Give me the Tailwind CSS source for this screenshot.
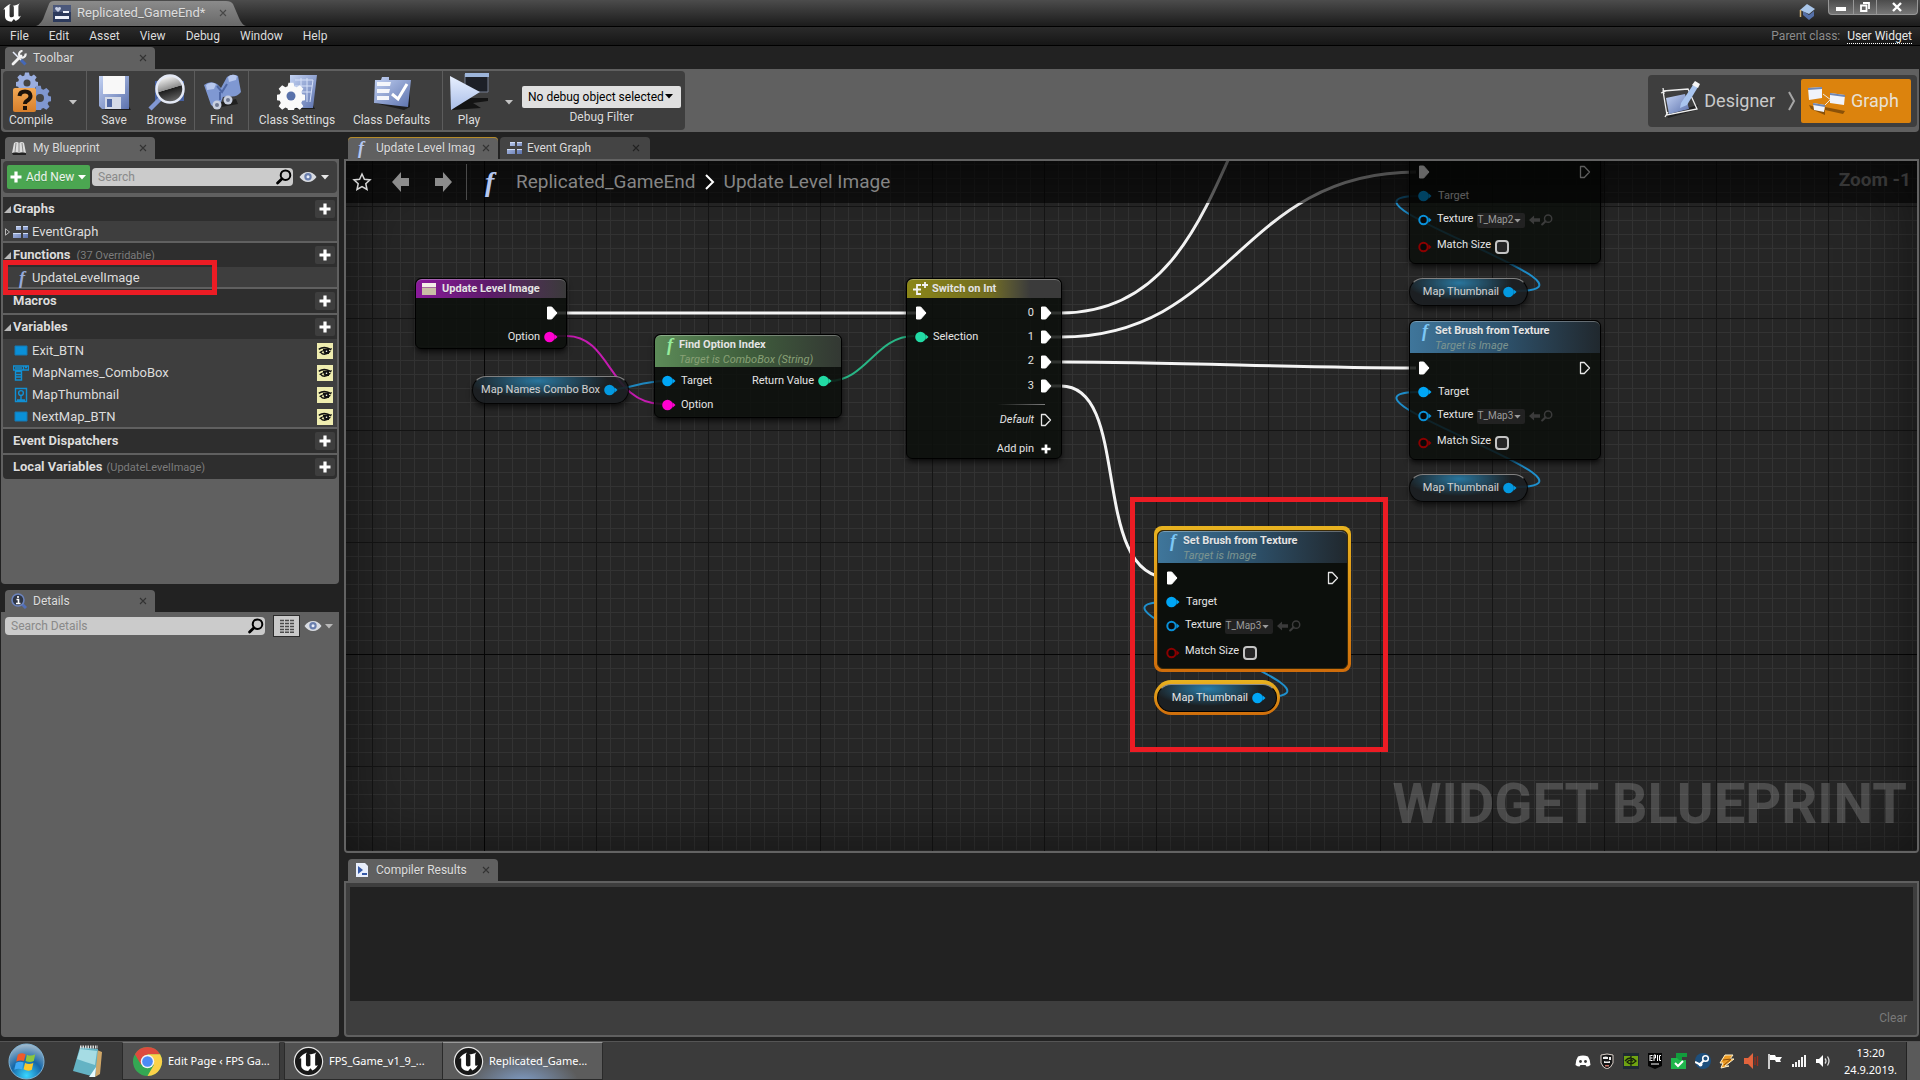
<!DOCTYPE html>
<html lang="en">
  <head>
    <meta charset="UTF-8" />
    <meta name="viewport" content="width=device-width, initial-scale=1.0" />
    <title>Replicated_GameEnd</title>
    <script src="https://cdn.jsdelivr.net/npm/@tailwindcss/browser@4"></script>
  </head>
  <body class="h-screen overflow-hidden bg-[#222222] font-['Roboto',sans-serif] text-xs text-[#dcdcdc]">
    <!-- shared icons -->
    <svg class="absolute h-0 w-0">
      <defs>
        <linearGradient id="steel" x1="0" y1="0" x2="1" y2="1"><stop offset="0" stop-color="#c3d2f3" /><stop offset="1" stop-color="#5c72ad" /></linearGradient>
        <linearGradient id="ice" x1="0" y1="0" x2="0" y2="1"><stop offset="0" stop-color="#e8f0ff" /><stop offset="1" stop-color="#a9bde8" /></linearGradient>
        <linearGradient id="box" x1="0" y1="0" x2="0" y2="1"><stop offset="0" stop-color="#f3a955" /><stop offset="1" stop-color="#d87f2a" /></linearGradient>
        <linearGradient id="lens" x1="0.3" y1="0" x2="0.6" y2="1"><stop offset="0" stop-color="#ffffff" /><stop offset=".5" stop-color="#8f8f8f" /><stop offset=".52" stop-color="#1e1e1e" /><stop offset="1" stop-color="#6b6b6b" /></linearGradient>
        <radialGradient id="orb" cx=".5" cy=".9" r=".9"><stop offset="0" stop-color="#39d6ff" /><stop offset=".5" stop-color="#1667a8" /><stop offset="1" stop-color="#a7bccc" /></radialGradient>
        <symbol id="close" viewBox="0 0 8 8"><path d="M1 1l6 6M7 1l-6 6" stroke="currentColor" stroke-width="1.1" /></symbol>
        <symbol id="plus" viewBox="0 0 12 12"><path d="M4.4 0.5h3.2v3.9h3.9v3.2H7.600v3.9H4.400V7.600H0.500V4.400h3.900z" fill="currentColor" /></symbol>
        <symbol id="caret" viewBox="0 0 8 5"><path d="M0 0h8L4 4.500z" fill="currentColor" /></symbol>
        <symbol id="open" viewBox="0 0 7 7"><path d="M7 0v7H0z" fill="#b9b9b9" /></symbol>
        <symbol id="find" viewBox="0 0 16 16"><circle cx="9.500" cy="6.200" r="4.800" fill="none" stroke="currentColor" stroke-width="2" /><path d="M6 9.700L1.600 14" stroke="currentColor" stroke-width="2.800" stroke-linecap="round" /></symbol>
        <symbol id="gear" viewBox="-10 -10 20 20"><path d="M-1.800-9.500h3.600l.6 2.600 1.600.7 2.300-1.500 2.500 2.500-1.500 2.300.7 1.600 2.600.6v3.600l-2.600.5-.7 1.600 1.500 2.300-2.500 2.500-2.300-1.500-1.600.7-.6 2.500h-3.600l-.6-2.500-1.600-.7-2.300 1.500-2.500-2.500 1.500-2.300-.7-1.600-2.500-.5v-3.600l2.500-.6.7-1.600-1.500-2.300 2.500-2.500 2.300 1.500 1.600-.7z" fill="currentColor" /></symbol>
        <symbol id="graph" viewBox="0 0 17 14"><path d="M4 1h5v4H4zM11 1h5v4h-5zM1 8h8v5H1zM11 8h5v5h-5z" fill="url(#steel)" /><path d="M4 1h5v1H4zM11 1h5v1h-5zM1 8h8v1H1zM11 8h5v1h-5z" fill="#cfdcf5" /></symbol>
        <symbol id="eye" viewBox="0 0 18 12"><path d="M0.500 6Q4 1 9 1t8.500 5Q14 11 9 11T0.500 6z" fill="#d9dce2" /><circle cx="9" cy="5.800" r="3.700" fill="#6a7fae" /><circle cx="9" cy="5.800" r="1.500" fill="#e9eefa" /></symbol>
        <symbol id="visible" viewBox="0 0 16 16"><path d="M0 0h16v16H0z" fill="#efedb0" /><path d="M1.500 5.500Q7 2 13.500 5.500L15 5l-1 2.500Q8 4 2 7z" fill="#111" /><path d="M2 9.300Q7.500 5 14 8.500 10 13 5 11.500 4 10 2 9.300z" fill="#111" /><path d="M6 6h6v5H6z" fill="#111" /><path d="M4.500 9.200q1-.9 2-1.200 0 1.500 1 2.400-1.600.2-3-1.200z" fill="#efedb0" /><circle cx="9.500" cy="8.300" r=".8" fill="#fff" /></symbol>
        <symbol id="exec" viewBox="0 0 12 14"><path d="M1.500 1h4.200L11 7l-5.300 6H1.500z" fill="#ffffff" stroke="#ffffff" stroke-linejoin="round" /></symbol>
        <symbol id="exec-open" viewBox="0 0 12 14"><path d="M1.500 1.500h3.800L10.500 7l-5.200 5.500H1.500z" fill="none" stroke="#e6e6e6" stroke-width="1.300" stroke-linejoin="round" /></symbol>
        <symbol id="pin" viewBox="0 0 14 12"><circle cx="5.500" cy="6" r="5.300" fill="currentColor" /><path d="M10.500 3.200L13.500 6l-3 2.800z" fill="currentColor" /></symbol>
        <symbol id="pin-open" viewBox="0 0 14 12"><circle cx="5.500" cy="6" r="4.200" fill="#080808" stroke="currentColor" stroke-width="2" /><path d="M10.500 3.200L13.500 6l-3 2.800z" fill="currentColor" /></symbol>
        <symbol id="back" viewBox="0 0 12 10"><path d="M5.500 0v3H12v4H5.500v3L0 5z" fill="currentColor" /></symbol>
        <symbol id="unreal" viewBox="0 0 24 24"><path d="M2 9C4 5.500 7.200 3.200 10.600 2.200C9.500 3.200 9.200 4 9.200 5v10.300c0 1.400 1 2.200 2.200 2.200 1.100 0 2-.5 2.700-1.200V6.200c0-.9-.5-1.500-1.400-1.800C15.500 4 18.500 3.500 21 1.500c-1 1.200-1.700 2.300-1.700 3.800v9.900c0 1 .4 1.400 1 1.400.7 0 1.300-.4 2-1.100-1.100 3-3.400 5.200-6 6.300l-2.200-2.300-2.500 3C7 22.200 4 20 4 16.500V9c0-.9-.9-.9-2 0z" fill="#ffffff" /></symbol>
      </defs>
    </svg>

    <div class="flex h-full flex-col">
      <!-- title bar -->
      <header class="flex h-[26px] shrink-0 items-start bg-gradient-to-b from-[#4c4c4c] to-[#1c1c1c]">
        <svg class="mt-0.5 h-[21px] w-6"><use href="#unreal" /></svg>
        <div class="relative ml-3 flex h-[26px] w-[210px] items-center">
          <svg class="absolute inset-0 h-full w-full" viewBox="0 0 210 26" preserveAspectRatio="none">
            <defs><linearGradient id="tab" x1="0" y1="0" x2="0" y2="1"><stop offset="0" stop-color="#8b8b8b" /><stop offset="1" stop-color="#686868" /></linearGradient></defs>
            <path d="M0 26Q6 24 9 14L13 4Q14 1 18 1H190Q195 1 197 4L203 18Q206 25 210 26z" fill="url(#tab)" />
          </svg>
          <svg class="relative ml-[17px] h-[17px] w-[18px]" viewBox="0 0 18 17"><path d="M0 0h18v17H0z" fill="#2c3a5c" /><path d="M0 0h18v7H0z" fill="#4b587b" /><path d="M5 7L2 4q0-2 1.500-2T5 3q.5-1 1.800-1T8 4z" fill="#c8d0e5" /><path d="M10 6h6v2h-6zM2 11h14v3H2z" fill="#eef2fb" /></svg>
          <span class="relative ml-1.5 text-[13px] leading-5 text-shadow-2xs text-[#dddddd]">Replicated_GameEnd*</span>
          <button class="absolute right-[19px] text-[#474747]" aria-label="Close tab"><svg class="h-2 w-2"><use href="#close" /></svg></button>
        </div>
        <div class="ml-auto flex items-start">
          <svg class="mt-1 mr-3 h-4 w-[18px]" viewBox="0 0 18 16"><path d="M5 7l6 4 5-4v5l-5 4-6-5z" fill="#5570a8" /><path d="M9 0l8 5-6 5-9-4z" fill="#a9c6ea" /><path d="M2.500 6v7" stroke="#d3b070" stroke-width="1.500" /></svg>
          <button class="flex h-[15px] w-[26px] items-center justify-center rounded-bl-sm border border-t-0 border-[#979797] bg-gradient-to-b from-[#4c4c4c] to-[#777]" aria-label="Minimize"><span class="mt-1 h-1 w-2.5 bg-white"></span></button>
          <button class="flex h-[15px] w-[23px] items-center justify-center border border-t-0 border-l-0 border-[#979797] bg-gradient-to-b from-[#4c4c4c] to-[#777]" aria-label="Restore"><svg class="h-2.5 w-2.5" viewBox="0 0 10 10"><path d="M3 1h6v6M1 3.500h5.500V9H1z" fill="none" stroke="#fff" stroke-width="1.800" /></svg></button>
          <button class="mr-0.5 flex h-[15px] w-[41px] items-center justify-center rounded-br-sm border border-t-0 border-l-0 border-[#979797] bg-gradient-to-b from-[#4c4c4c] to-[#777] text-white" aria-label="Close"><svg class="h-2.5 w-2.5" viewBox="0 0 10 10"><path d="M1 1l8 8M9 1L1 9" stroke="#fff" stroke-width="2.400" /></svg></button>
        </div>
      </header>

      <!-- menu bar -->
      <nav class="flex h-5 shrink-0 items-center gap-5 border-y border-black bg-gradient-to-b from-[#2b2b2b] to-[#161616] pr-2 pl-2.5 text-shadow-2xs">
        <button>File</button>
        <button>Edit</button>
        <button>Asset</button>
        <button>View</button>
        <button>Debug</button>
        <button>Window</button>
        <button>Help</button>
        <span class="ml-auto whitespace-nowrap text-[#8c8c8c]">Parent class: <a href="#" class="ml-1 border-b border-dotted border-white text-[#e8e8e8]">User Widget</a></span>
      </nav>

      <!-- toolbar -->
      <div class="shrink-0 px-px pt-px">
        <div class="ml-1 flex h-[22px] w-[150px] items-center rounded-t-sm bg-[#606060] pl-1.5 text-shadow-2xs">
          <svg class="h-4 w-4" viewBox="0 0 16 16"><path d="M2 2l9 9" stroke="#e6ecfa" stroke-width="1.500" /><path d="M10 10l4.500 4.500" stroke="#4468b8" stroke-width="3" /><path d="M2 14l8-8" stroke="#f2f2f2" stroke-width="2.800" stroke-linecap="round" /><path d="M14.500 3.500A3.300 3.300 0 1 1 11.500 1" fill="none" stroke="#f2f2f2" stroke-width="2.200" /></svg>
          <span class="ml-1.5">Toolbar</span>
          <button class="mr-2 ml-auto text-[#333]" aria-label="Close Toolbar"><svg class="h-2 w-2"><use href="#close" /></svg></button>
        </div>
        <div class="flex h-[63px] items-center justify-between rounded-b-sm bg-[#606060] px-0.5">
          <div class="flex h-[59px] items-stretch rounded bg-[#3e3e3e] pr-1 text-shadow-2xs">
            <button class="flex w-14 flex-col items-center pt-px">
              <svg class="h-10 w-10" viewBox="0 0 40 40"><use href="#gear" x="5" y="0" width="22" height="22" color="#9aaee0" /><use href="#gear" x="15" y="13" width="25" height="25" color="#7f97d0" /><circle cx="16" cy="11" r="3.500" fill="#444" /><circle cx="29" cy="26" r="4" fill="#444" /><rect x="2" y="16" width="23" height="24" rx="2" fill="url(#box)" /><path d="M8.500 24Q9 19.500 14 19.500T19.500 24Q19.500 26.500 16.500 28.500Q14 29.700 14 32M14 34v4" fill="none" stroke="#1c120a" stroke-width="4" /></svg>
              <span>Compile</span>
            </button>
            <button class="flex w-7 items-center justify-center border-r border-[#5c5c5c] text-[#c4c4c4]" aria-label="Compile options"><svg class="mt-1 h-[5px] w-2"><use href="#caret" /></svg></button>
            <button class="flex w-[54px] flex-col items-center pt-px">
              <svg class="h-10 w-10" viewBox="0 0 40 40"><path d="M8 38h29l-3-5z" fill="#1c1c1c" /><path d="M5 4h30v33H8l-3-3z" fill="url(#steel)" /><path d="M9 4h22v18H9z" fill="#f8f8f8" /><path d="M11 25h16v12H11z" fill="#d5dbe8" /><path d="M13 27h5v8h-5z" fill="#526aa5" /></svg>
              <span>Save</span>
            </button>
            <button class="flex w-[53px] flex-col items-center pt-px pr-0.5">
              <svg class="h-10 w-10" viewBox="0 0 40 40"><path d="M8 9h6v20H8zM33 9h4v20h-6z" fill="#4660a0" /><path d="M13 27L3 37" stroke="#8197d2" stroke-width="4.500" /><circle cx="23" cy="17" r="13.500" fill="url(#lens)" stroke="#e4e9f5" stroke-width="2.500" /></svg>
              <span>Browse</span>
            </button>
            <button class="flex w-[55px] flex-col items-center border-x border-[#5c5c5c] pt-px">
              <svg class="h-10 w-10" viewBox="0 0 40 40"><path d="M14 36l22-4-2-5-18 4z" fill="#202020" /><path d="M2 13q6-5 13-1l4 4 6-11q5-4 11-1l3 16q-5 6-12 4l-6 1-3 8q-5 3-9 0z" fill="#7f98d2" /><path d="M4 13q5-4 10-1l-2 5-7 1zM26 5q4-4 9-1l-1 4-7 2z" fill="#b6c7ee" /><path d="M15 14l5 6 5-8M18 20v8" stroke="#4f68a5" stroke-width="2" fill="none" /><circle cx="15" cy="33" r="4.500" fill="#c8cfdf" /><circle cx="15" cy="33" r="2" fill="#6e7891" /><circle cx="26" cy="28" r="4.500" fill="#c8cfdf" /><circle cx="26" cy="28" r="2" fill="#6e7891" /></svg>
              <span>Find</span>
            </button>
            <button class="flex w-24 flex-col items-center pt-px">
              <svg class="h-10 w-10" viewBox="0 0 40 40"><path d="M14 37h24l-3-6H18z" fill="#1d1d1d" /><path d="M13 3h27l-4 33H13z" fill="url(#steel)" /><path d="M18 8h18l-3 22M18 14h17M18 20h16M24 6v24M30 6v24" fill="none" stroke="#d5e0f8" stroke-width="1" /><use href="#gear" x="0" y="10" width="28" height="28" color="#fafafa" /><circle cx="14" cy="24" r="4.500" fill="#5871aa" /></svg>
              <span>Class Settings</span>
            </button>
            <button class="flex w-[98px] flex-col items-center border-r border-[#5c5c5c] pt-px pr-1">
              <svg class="h-10 w-10" viewBox="0 0 40 40"><path d="M2 31l30 7 6-3V14z" fill="#1d1d1d" /><path d="M3 8h6l1-3h7v3h22l-3 27L2 31z" fill="url(#steel)" /><path d="M5 10h14l-1 4H5zM5 17h13l-1 4H5zM5 24h12v4H5z" fill="#f4f6fb" /><path d="M20 22l6 5 9-15" fill="none" stroke="#fff" stroke-width="3" /></svg>
              <span>Class Defaults</span>
            </button>
            <button class="flex w-[52px] flex-col items-center pt-px">
              <svg class="h-10 w-10" viewBox="0 0 40 40"><path d="M16 2h23v18H16z" fill="#1d2027" stroke="#747d90" /><path d="M16 1h24v4H16z" fill="#9db5da" /><path d="M3 38L32 36l-8-5 15-2v-3H12z" fill="#141414" /><path d="M1 4l30 16L2 38z" fill="url(#ice)" /></svg>
              <span>Play</span>
            </button>
            <button class="flex w-[27px] items-center justify-center text-[#c4c4c4]" aria-label="Play options"><svg class="mt-1 h-[5px] w-2"><use href="#caret" /></svg></button>
            <div class="flex flex-col items-center pt-[15px]">
              <div class="relative">
                <select id="debug" class="block h-[22px] w-[159px] appearance-none rounded-xs bg-[#e0e0e0] pl-1.5 text-xs text-black">
                  <option>No debug object selected</option>
                </select>
                <svg class="pointer-events-none absolute top-2 right-2 h-[5px] w-2 text-black"><use href="#caret" /></svg>
              </div>
              <label for="debug" class="mt-px">Debug Filter</label>
            </div>
          </div>
          <div class="flex h-[52px] items-center rounded bg-[#3e3e3e] px-1.5 text-lg text-[#c9c9c9]">
            <button class="flex items-center">
              <svg class="ml-1.5 h-10 w-10" viewBox="0 0 40 40"><path d="M7 34L34 25l4-1-2 5-28 8z" fill="#222" /><path d="M3 10l25-2 9 20L7 34zM1 12l5-2M3 7l1 6M5 36l3-5" fill="none" stroke="#eee" stroke-width="1.300" /><path d="M6 17l19-4 4 15-20 5z" fill="url(#steel)" /><path d="M21 22L33 4l5 2-11 18-7 3z" fill="#a9c5ef" /><path d="M32 4l3-4 5 3-2 4z" fill="#f4f4f4" /></svg>
              <span class="ml-1">Designer</span>
            </button>
            <svg class="mr-1 ml-2.5 h-5 w-3" viewBox="0 0 12 20"><path d="M4 1l5 9-5 9" fill="none" stroke="#a5a5a5" stroke-width="2" /></svg>
            <button class="flex h-11 w-[110px] items-center rounded-xs bg-[#dc830d] pl-1.5 text-[#e9e1d5]">
              <svg class="h-8 w-10" viewBox="0 0 40 32"><path d="M2 20l16 5v5L4 24zM18 22l20 4-2 3-18-4z" fill="#8b5108" /><path d="M16 9l8 6M24 14l-6 6" stroke="#e9e9e9" /><path d="M1 3l14-1v11L2 15zM23 8l15 2-1 10-14-2zM6 18l12 2-1 7-10-2z" fill="#f0f3fa" /><path d="M1 3l14-1v2L1 5zM23 8l15 2v2l-15-2zM6 18l12 2v2L6 20z" fill="#6f86b3" /></svg>
              <span class="ml-1">Graph</span>
            </button>
          </div>
        </div>
      </div>

      <main class="flex min-h-0 flex-1 gap-[5px] px-px pt-[5px] pb-1">
        <!-- left column -->
        <aside class="flex w-[338px] shrink-0 flex-col gap-1.5">
          <section class="flex flex-1 flex-col">
            <div class="ml-1 flex h-[22px] w-[150px] shrink-0 items-center rounded-t-sm bg-[#606060] pl-1.5 text-shadow-2xs">
              <svg class="h-4 w-4" viewBox="0 0 16 16"><path d="M1 13h14v2H2z" fill="#222" /><path d="M3 3q3-2 5 0 3-2 5 0l2 10q-4-2-7 0-3-2-7 0z" fill="#dedede" /><path d="M8 3v10M5 3L4 12M11 3l1 9" stroke="#8a8a8a" /></svg>
              <span class="ml-1.5">My Blueprint</span>
              <button class="mr-2 ml-auto text-[#333]" aria-label="Close My Blueprint"><svg class="h-2 w-2"><use href="#close" /></svg></button>
            </div>
            <div class="relative flex flex-1 flex-col gap-0.5 rounded-b-sm bg-[#606060] p-0.5 text-[13px]">
              <div class="mb-0.5 flex h-8 items-center rounded-sm bg-[#3e3e3e] px-1">
                <button class="flex h-6 w-[83px] items-center gap-1 rounded-xs bg-[#4ba651] pl-[3px] text-xs text-white/90 text-shadow-2xs">
                  <svg class="h-3 w-3 text-white"><use href="#plus" /></svg>Add New<svg class="h-[5px] w-2 text-white"><use href="#caret" /></svg>
                </button>
                <div class="relative ml-0.5">
                  <input type="text" aria-label="Search" placeholder="Search" class="block h-[18px] w-[201px] rounded-sm bg-[#cbcbcb] px-1.5 text-xs text-black placeholder:text-[#898989]" />
                  <svg class="absolute top-px right-px h-4 w-4 text-black"><use href="#find" /></svg>
                </div>
                <button class="ml-1.5 flex items-center gap-1 text-[#e8e8e8]" aria-label="View options"><svg class="h-3 w-[18px]"><use href="#eye" /></svg><svg class="h-[5px] w-2"><use href="#caret" /></svg></button>
              </div>

              <div class="bg-[#3e3e3e]">
                <h2 class="flex h-6 items-center bg-[#2e2e2e] pr-0.5 pl-px font-bold text-shadow-2xs"><svg class="mr-0.5 h-[7px] w-[7px]"><use href="#open" /></svg>Graphs<button class="ml-auto flex h-[18px] w-5 items-center justify-center rounded-xs bg-[#3e3e3e] text-white" aria-label="Add graph"><svg class="h-3 w-3"><use href="#plus" /></svg></button></h2>
                <div class="flex h-5 items-center pt-px pl-0.5"><svg class="h-2 w-[5px]" viewBox="0 0 5 8"><path d="M.5.8v6.400L4.500 4z" fill="none" stroke="#b9b9b9" /></svg><svg class="ml-0.5 h-3.5 w-[17px]"><use href="#graph" /></svg><span class="ml-[3px]">EventGraph</span></div>
              </div>
              <div class="bg-[#3e3e3e]">
                <h2 class="flex h-6 items-center bg-[#2e2e2e] pr-0.5 pl-px font-bold text-shadow-2xs"><svg class="mr-0.5 h-[7px] w-[7px]"><use href="#open" /></svg>Functions<span class="mt-0.5 ml-1.5 text-[11px] font-normal text-[#7d7d7d]">(37 Overridable)</span><button class="ml-auto flex h-[18px] w-5 items-center justify-center rounded-xs bg-[#3e3e3e] text-white" aria-label="Add function"><svg class="h-3 w-3"><use href="#plus" /></svg></button></h2>
                <div class="flex h-5 items-center pt-px pl-4"><span class="w-[13px] font-['Liberation_Serif',serif] text-lg leading-5 font-bold text-[#95a9d9] italic">f</span>UpdateLevelImage</div>
              </div>
              <h2 class="flex h-6 items-center bg-[#2e2e2e] pr-0.5 pl-2.5 font-bold text-shadow-2xs">Macros<button class="ml-auto flex h-[18px] w-5 items-center justify-center rounded-xs bg-[#3e3e3e] text-white" aria-label="Add macro"><svg class="h-3 w-3"><use href="#plus" /></svg></button></h2>
              <div class="bg-[#3e3e3e]">
                <h2 class="flex h-6 items-center bg-[#2e2e2e] pr-0.5 pl-px font-bold text-shadow-2xs"><svg class="mr-0.5 h-[7px] w-[7px]"><use href="#open" /></svg>Variables<button class="ml-auto flex h-[18px] w-5 items-center justify-center rounded-xs bg-[#3e3e3e] text-white" aria-label="Add variable"><svg class="h-3 w-3"><use href="#plus" /></svg></button></h2>
                <ul>
                  <li class="flex h-[22px] items-center pt-px pr-1 pl-2.5"><svg class="h-4 w-4" viewBox="0 0 16 16"><path d="M2 3h12v9H2z" fill="#0a90d8" stroke="#1579b3" /></svg><span class="ml-[3px]">Exit_BTN</span><svg class="ml-auto h-4 w-4"><use href="#visible" /></svg></li>
                  <li class="flex h-[22px] items-center pt-px pr-1 pl-2.5"><svg class="h-4 w-4" viewBox="0 0 16 16"><path d="M.5 1h15v4H.5zM10.500 1v4M2 3h7M12 2.500h2M2.500 6.500h6V15h-6zM3 9.500h6M3 12h6" fill="none" stroke="#1190d4" stroke-width="1.400" /></svg><span class="ml-[3px]">MapNames_ComboBox</span><svg class="ml-auto h-4 w-4"><use href="#visible" /></svg></li>
                  <li class="flex h-[22px] items-center pt-px pr-1 pl-2.5"><svg class="h-4 w-4" viewBox="0 0 16 16"><path d="M2.500 1.500h11v13h-11zM4 13h8M8 8v5" fill="none" stroke="#1190d4" stroke-width="1.400" /><circle cx="8" cy="6" r="2.400" fill="none" stroke="#1190d4" stroke-width="1.400" /></svg><span class="ml-[3px]">MapThumbnail</span><svg class="ml-auto h-4 w-4"><use href="#visible" /></svg></li>
                  <li class="flex h-[22px] items-center pt-px pr-1 pl-2.5"><svg class="h-4 w-4" viewBox="0 0 16 16"><path d="M2 3h12v9H2z" fill="#0a90d8" stroke="#1579b3" /></svg><span class="ml-[3px]">NextMap_BTN</span><svg class="ml-auto h-4 w-4"><use href="#visible" /></svg></li>
                </ul>
              </div>
              <h2 class="flex h-6 items-center bg-[#2e2e2e] pr-0.5 pl-2.5 font-bold text-shadow-2xs">Event Dispatchers<button class="ml-auto flex h-[18px] w-5 items-center justify-center rounded-xs bg-[#3e3e3e] text-white" aria-label="Add event dispatcher"><svg class="h-3 w-3"><use href="#plus" /></svg></button></h2>
              <h2 class="flex h-6 items-center rounded-b-sm bg-[#2e2e2e] pr-0.5 pl-2.5 font-bold text-shadow-2xs">Local Variables<span class="mt-0.5 ml-1 text-[11px] font-normal text-[#7d7d7d]">(UpdateLevelImage)</span><button class="ml-auto flex h-[18px] w-5 items-center justify-center rounded-xs bg-[#3e3e3e] text-white" aria-label="Add local variable"><svg class="h-3 w-3"><use href="#plus" /></svg></button></h2>
              <div class="pointer-events-none absolute top-[101px] left-0.5 h-[35px] w-[214px] border-5 border-[#ec1c24]"></div>
            </div>
          </section>

          <section class="flex flex-1 flex-col">
            <div class="ml-1 flex h-[22px] w-[150px] shrink-0 items-center rounded-t-sm bg-[#606060] pl-1.5 text-shadow-2xs">
              <svg class="h-4 w-4" viewBox="0 0 16 16"><path d="M10 10l5 5" stroke="#526fb8" stroke-width="3" /><circle cx="7" cy="7" r="6" fill="#2f3645" stroke="#6b83bd" stroke-width="1.600" /><path d="M7 3v2M5.500 6.500h2V10M5 10.500h4.500" stroke="#fff" stroke-width="1.600" fill="none" /></svg>
              <span class="ml-1.5">Details</span>
              <button class="mr-2 ml-auto text-[#333]" aria-label="Close Details"><svg class="h-2 w-2"><use href="#close" /></svg></button>
            </div>
            <div class="flex flex-1 items-start rounded-b-sm bg-[#606060] px-1 pt-[3px]">
              <div class="relative mt-0.5">
                <input type="text" aria-label="Search Details" placeholder="Search Details" class="block h-[18px] w-[260px] rounded-sm bg-[#cbcbcb] px-1.5 text-xs text-black placeholder:text-[#898989]" />
                <svg class="absolute top-px right-px h-4 w-4 text-black"><use href="#find" /></svg>
              </div>
              <button class="ml-2 flex h-[22px] w-[27px] items-center justify-center border border-[#2b2b2b] bg-[#c9c9c9]" aria-label="Property matrix"><svg class="h-3.5 w-3.5" viewBox="0 0 14 14"><path d="M0 1.500h14M0 4.500h14M0 7.500h14M0 10.500h14M0 13.300h14" stroke="#4b4b4b" stroke-width="1.500" /><path d="M4.500 0v14M9.500 0v14" stroke="#c9c9c9" /></svg></button>
              <button class="mt-[5px] ml-1 flex items-center gap-[3px] text-[#b9b9b9]" aria-label="Details view options"><svg class="h-3 w-[18px]"><use href="#eye" /></svg><svg class="h-[5px] w-2"><use href="#caret" /></svg></button>
            </div>
          </section>
        </aside>

        <!-- right column -->
        <div class="flex min-w-0 flex-1 flex-col gap-1.5">
          <section class="flex min-h-0 flex-1 flex-col">
            <div class="ml-1 flex h-[22px] shrink-0 gap-0.5 text-shadow-2xs">
              <div class="flex w-[150px] items-center rounded-t-sm bg-[#606060] pl-2.5 inset-shadow-[0_1px_0_#b58b29]">
                <span class="w-[18px] font-['Liberation_Serif',serif] text-lg leading-5 font-bold text-[#b5c7f0] italic">f</span>
                <span>Update Level Imag</span>
                <button class="mr-2 ml-auto text-[#333]" aria-label="Close Update Level Image"><svg class="h-2 w-2"><use href="#close" /></svg></button>
              </div>
              <div class="flex w-[150px] items-center rounded-t-sm bg-[#444444] pl-1.5">
                <svg class="h-3.5 w-[17px]"><use href="#graph" /></svg>
                <span class="ml-1">Event Graph</span>
                <button class="mr-2.5 ml-auto text-[#222]" aria-label="Close Event Graph"><svg class="h-2 w-2"><use href="#close" /></svg></button>
              </div>
            </div>

            <!-- graph canvas -->
            <div class="relative flex-1 overflow-hidden rounded-b-sm border-2 border-[#636363] bg-[#262626] text-[11px] text-[#e4e4e4]">
              <svg class="absolute inset-0 h-full w-full" fill="none">
                <defs>
                  <pattern id="minor" x="12" y="3" width="14" height="14" patternUnits="userSpaceOnUse"><path d="M0 .5h14M.5 0v14" stroke="#333333" /></pattern>
                  <pattern id="major" x="26" y="45" width="112" height="112" patternUnits="userSpaceOnUse"><path d="M0 .5h112M.5 0v112" stroke="#151515" /></pattern>
                </defs>
                <rect width="100%" height="100%" fill="url(#minor)" />
                <rect width="100%" height="100%" fill="url(#major)" />
                <path d="M138.500 0v700M0 493.500h1600" stroke="#050505" />
                <g stroke="#f4f4f4" stroke-width="3">
                  <path d="M210 152H572" />
                  <path d="M704 152h11C915 152 863-185 1063-185" />
                  <path d="M704 176h11C885 176 893 11 1070 11" />
                  <path d="M704 201h11C835 201 950 207 1070 207" />
                  <path d="M704 225h11C787 225 742 417 824 417" />
                </g>
                <path d="M208 175h13C265 175 264 243 316 243" stroke="#c41bb0" stroke-width="2" />
                <path d="M268 228C285 228 295 220 320 220" stroke="#1f86bd" stroke-width="2" />
                <path d="M483 220C520 220 530 175 568 175" stroke="#28b585" stroke-width="2" />
                <g stroke="#1f8fcc" stroke-width="2">
                  <path d="M917 536C1029 536 712 441 822 441" />
                  <path d="M1169 326C1281 326 964 231 1074 231" />
                  <path d="M1169 130C1281 130 964 35 1074 35" />
                </g>
              </svg>
              <div class="pointer-events-none absolute inset-0 shadow-[inset_0_0_70px_rgba(0,0,0,0.55)]"></div>
              <div class="absolute right-2.5 bottom-3 text-[56px] leading-[70px] font-bold text-white/18">WIDGET BLUEPRINT</div>

              <!-- function entry -->
              <article class="absolute top-[117px] left-[69px] h-[71px] w-[152px] rounded-md border border-black bg-[#0c0f0c]/85 shadow-md shadow-black/60">
                <h3 class="flex h-[19px] items-center gap-1.5 rounded-t-md border-t border-white/30 bg-gradient-to-r from-[#8a1a9b] via-[#5c1a69] to-[#3a3a3a] pl-1.5 font-bold text-shadow-2xs"><svg class="h-3 w-3.5" viewBox="0 0 14 12"><path d="M0 0h14v4H0z" fill="#f3efe6" /><path d="M0 4.500h14V12H0z" fill="#c9bfa6" /></svg>Update Level Image</h3>
                <div class="flex h-[30px] items-center justify-end pr-2"><svg class="h-3.5 w-3"><use href="#exec" /></svg></div>
                <div class="flex h-[18px] items-center justify-end gap-1 pr-2">Option<svg class="h-3 w-3.5 text-[#ff00d0]"><use href="#pin" /></svg></div>
              </article>

              <article class="absolute top-[215px] left-[126px] flex h-7 w-[157px] items-center justify-end gap-1 rounded-full border border-t-[#8b8b8b] border-black bg-[radial-gradient(ellipse_at_42%_15%,#2a7fab,#1b1f22_55%)] pr-2.5 shadow-md shadow-black/60 opacity-90">Map Names Combo Box<svg class="h-3 w-3.5 text-[#00a6f6]"><use href="#pin" /></svg></article>

              <!-- pure function -->
              <article class="absolute top-[173px] left-[308px] h-[84px] w-[188px] rounded-md border border-black bg-[#0c0f0c]/85 shadow-md shadow-black/60">
                <header class="flex h-8 rounded-t-md border-t border-white/30 bg-gradient-to-r from-[#5c8b58] via-[#3f5e3c] to-[#333833] pl-3">
                  <span class="w-3 font-['Liberation_Serif',serif] text-lg leading-[18px] font-bold text-[#96ec9c] italic">f</span>
                  <div><h3 class="font-bold leading-[17px] text-shadow-2xs">Find Option Index</h3><p class="leading-3.5 text-[#89a176] italic">Target is ComboBox (String)</p></div>
                </header>
                <div class="flex h-7 items-center justify-between pr-[9px] pl-[7px]"><span class="flex items-center gap-[5px]"><svg class="h-3 w-3.5 text-[#00a6f6]"><use href="#pin" /></svg>Target</span><span class="flex items-center gap-1">Return Value<svg class="h-3 w-3.5 text-[#22dba5]"><use href="#pin" /></svg></span></div>
                <div class="flex h-5 items-center gap-[5px] px-[7px]"><svg class="h-3 w-3.5 text-[#ff00d0]"><use href="#pin" /></svg>Option</div>
              </article>

              <!-- switch -->
              <article class="absolute top-[117px] left-[560px] h-[181px] w-[156px] rounded-md border border-black bg-[#0c0f0c]/85 shadow-md shadow-black/60">
                <h3 class="flex h-[19px] items-center gap-1 rounded-t-md border-t border-white/30 bg-gradient-to-r from-[#8b8617] via-[#716c20] via-55% to-[#3b3b3b] to-80% pl-1.5 font-bold text-shadow-2xs"><svg class="h-3.5 w-[15px]" viewBox="0 0 15 14"><path d="M8 3H4v9h4M0 7.500h8M9 3h6M12 0v6" fill="none" stroke="#f2f2f2" stroke-width="1.800" /></svg>Switch on Int</h3>
                <div class="flex justify-between pr-[9px] pl-2">
                  <div>
                    <div class="flex h-[30px] items-center"><svg class="h-3.5 w-3"><use href="#exec" /></svg></div>
                    <div class="flex h-[18px] items-center gap-1"><svg class="h-3 w-3.5 text-[#22dba5]"><use href="#pin" /></svg>Selection</div>
                  </div>
                  <div class="pt-[3px]">
                    <div class="flex h-6 items-center justify-end gap-1.5">0<svg class="h-3.5 w-3"><use href="#exec" /></svg></div>
                    <div class="flex h-6 items-center justify-end gap-1.5">1<svg class="h-3.5 w-3"><use href="#exec" /></svg></div>
                    <div class="flex h-[25px] items-center justify-end gap-1.5">2<svg class="h-3.5 w-3"><use href="#exec" /></svg></div>
                    <div class="flex h-6 items-center justify-end gap-1.5">3<svg class="h-3.5 w-3"><use href="#exec" /></svg></div>
                    <div class="mt-1.5 h-px w-12 bg-gradient-to-r from-transparent to-[#7b7b7b]"></div>
                    <div class="flex h-[30px] items-center justify-end gap-1.5 italic">Default<svg class="h-3.5 w-3"><use href="#exec-open" /></svg></div>
                    <button class="flex h-[28px] w-full items-center justify-end gap-1.5 whitespace-nowrap">Add pin<svg class="h-2.5 w-3 text-white"><use href="#plus" /></svg></button>
                  </div>
                </div>
              </article>

              <!-- set brush, map 2 -->
              <article class="absolute -top-[37px] left-[1063px] h-[140px] w-[192px] rounded-md border border-black bg-[#0c0f0c]/85 shadow-md shadow-black/60">
                <header class="flex h-8 pl-2.5"></header>
                <div class="flex h-[29px] items-center justify-between pr-[9px] pl-2"><svg class="h-3.5 w-3"><use href="#exec" /></svg><svg class="h-3.5 w-3"><use href="#exec-open" /></svg></div>
                <div class="flex h-5 items-center gap-1.5 pl-2"><svg class="h-3 w-3.5 text-[#00a6f6]"><use href="#pin" /></svg>Target</div>
                <div class="flex h-7 items-center gap-1 pl-2"><svg class="h-3 w-3.5 text-[#0a90d8]"><use href="#pin-open" /></svg><label for="tex2" class="ml-px pb-0.5">Texture</label>
                  <div class="relative"><select id="tex2" class="block h-[15px] w-12 appearance-none rounded-xs bg-[#222] text-[10px] leading-none text-[#9a9a9a]"><option>T_Map2</option></select><svg class="pointer-events-none absolute top-1.5 right-1 h-1 w-[7px] text-[#9a9a9a]"><use href="#caret" /></svg></div>
                  <span class="flex items-center text-[#3b3b3b]"><svg class="h-2.5 w-[11px]"><use href="#back" /></svg><svg class="ml-px h-3 w-3"><use href="#find" /></svg></span></div>
                <div class="flex h-[26px] items-center gap-1 pl-2"><svg class="h-3 w-3.5 text-[#8b0000]"><use href="#pin-open" /></svg><label for="size2" class="ml-px pb-1">Match Size</label><input id="size2" type="checkbox" class="h-3.5 w-3.5 appearance-none rounded-sm border-2 border-[#c4c4c4] bg-[#262626]" /></div>
              </article>
              <article class="absolute top-[117px] left-[1063px] flex h-7 w-[119px] items-center justify-end gap-1 rounded-full border border-t-[#8b8b8b] border-black bg-[radial-gradient(ellipse_at_42%_15%,#2a7fab,#1b1f22_55%)] pr-2.5 shadow-md shadow-black/60 opacity-90">Map Thumbnail<svg class="h-3 w-3.5 text-[#00a6f6]"><use href="#pin" /></svg></article>

              <!-- set brush, map 3 -->
              <article class="absolute top-[159px] left-[1063px] h-[140px] w-[192px] rounded-md border border-black bg-[#0c0f0c]/85 shadow-md shadow-black/60">
                <header class="flex h-8 rounded-t-md border-t border-white/30 bg-gradient-to-r from-[#3f769b] via-[#2d516b] to-[#20282e] pl-3">
                  <span class="w-[13px] font-['Liberation_Serif',serif] text-lg leading-[18px] font-bold text-[#7cc7f5] italic">f</span>
                  <div><h3 class="font-bold leading-[17px] text-shadow-2xs">Set Brush from Texture</h3><p class="leading-3.5 text-[#7d9590] italic">Target is Image</p></div>
                </header>
                <div class="flex h-[29px] items-center justify-between pr-[9px] pl-2"><svg class="h-3.5 w-3"><use href="#exec" /></svg><svg class="h-3.5 w-3"><use href="#exec-open" /></svg></div>
                <div class="flex h-5 items-center gap-1.5 pl-2"><svg class="h-3 w-3.5 text-[#00a6f6]"><use href="#pin" /></svg>Target</div>
                <div class="flex h-7 items-center gap-1 pl-2"><svg class="h-3 w-3.5 text-[#0a90d8]"><use href="#pin-open" /></svg><label for="tex3" class="ml-px pb-0.5">Texture</label>
                  <div class="relative"><select id="tex3" class="block h-[15px] w-12 appearance-none rounded-xs bg-[#222] text-[10px] leading-none text-[#9a9a9a]"><option>T_Map3</option></select><svg class="pointer-events-none absolute top-1.5 right-1 h-1 w-[7px] text-[#9a9a9a]"><use href="#caret" /></svg></div>
                  <span class="flex items-center text-[#3b3b3b]"><svg class="h-2.5 w-[11px]"><use href="#back" /></svg><svg class="ml-px h-3 w-3"><use href="#find" /></svg></span></div>
                <div class="flex h-[26px] items-center gap-1 pl-2"><svg class="h-3 w-3.5 text-[#8b0000]"><use href="#pin-open" /></svg><label for="size3" class="ml-px pb-1">Match Size</label><input id="size3" type="checkbox" class="h-3.5 w-3.5 appearance-none rounded-sm border-2 border-[#c4c4c4] bg-[#262626]" /></div>
              </article>
              <article class="absolute top-[313px] left-[1063px] flex h-7 w-[119px] items-center justify-end gap-1 rounded-full border border-t-[#8b8b8b] border-black bg-[radial-gradient(ellipse_at_42%_15%,#2a7fab,#1b1f22_55%)] pr-2.5 shadow-md shadow-black/60 opacity-90">Map Thumbnail<svg class="h-3 w-3.5 text-[#00a6f6]"><use href="#pin" /></svg></article>

              <!-- selected pair -->
              <div class="absolute top-[365px] left-[808px] h-[146px] w-[197px] rounded-lg bg-gradient-to-b from-[#e8b320] to-[#cf6d0b]"></div>
              <article class="absolute top-[369px] left-[811px] h-[139px] w-[191px] rounded-md border border-[#3a2a08] bg-[#0c0f0c]">
                <header class="flex h-8 rounded-t-md border-t border-white/30 bg-gradient-to-r from-[#3f769b] via-[#2d516b] to-[#20282e] pl-3">
                  <span class="w-[13px] font-['Liberation_Serif',serif] text-lg leading-[18px] font-bold text-[#7cc7f5] italic">f</span>
                  <div><h3 class="font-bold leading-[17px] text-shadow-2xs">Set Brush from Texture</h3><p class="leading-3.5 text-[#7d9590] italic">Target is Image</p></div>
                </header>
                <div class="flex h-[29px] items-center justify-between pr-2 pl-2"><svg class="h-3.5 w-3"><use href="#exec" /></svg><svg class="h-3.5 w-3"><use href="#exec-open" /></svg></div>
                <div class="flex h-5 items-center gap-1.5 pl-2"><svg class="h-3 w-3.5 text-[#00a6f6]"><use href="#pin" /></svg>Target</div>
                <div class="flex h-7 items-center gap-1 pl-2"><svg class="h-3 w-3.5 text-[#0a90d8]"><use href="#pin-open" /></svg><label for="tex4" class="ml-px pb-0.5">Texture</label>
                  <div class="relative"><select id="tex4" class="block h-[15px] w-12 appearance-none rounded-xs bg-[#222] text-[10px] leading-none text-[#9a9a9a]"><option>T_Map3</option></select><svg class="pointer-events-none absolute top-1.5 right-1 h-1 w-[7px] text-[#9a9a9a]"><use href="#caret" /></svg></div>
                  <span class="flex items-center text-[#3b3b3b]"><svg class="h-2.5 w-[11px]"><use href="#back" /></svg><svg class="ml-px h-3 w-3"><use href="#find" /></svg></span></div>
                <div class="flex h-[26px] items-center gap-1 pl-2"><svg class="h-3 w-3.5 text-[#8b0000]"><use href="#pin-open" /></svg><label for="size4" class="ml-px pb-1">Match Size</label><input id="size4" type="checkbox" class="h-3.5 w-3.5 appearance-none rounded-sm border-2 border-[#c4c4c4] bg-[#262626]" /></div>
              </article>
              <div class="absolute top-[519px] left-[808px] h-[35px] w-[126px] rounded-full bg-gradient-to-b from-[#e8b320] to-[#cf6d0b]"></div>
              <article class="absolute top-[523px] left-[811px] flex h-7 w-[120px] items-center justify-end gap-1 rounded-full border border-t-[#8b8b8b] border-black bg-[radial-gradient(ellipse_at_42%_15%,#2a7fab,#1b1f22_55%)] pr-2.5">Map Thumbnail<svg class="h-3 w-3.5 text-[#00a6f6]"><use href="#pin" /></svg></article>
              <div class="pointer-events-none absolute top-[336px] left-[784px] h-[255px] w-[258px] border-5 border-[#ec1c24]"></div>

              <!-- breadcrumb strip -->
              <div class="absolute inset-x-0 top-0 flex h-[42px] items-center bg-black/60 px-1.5 text-[19px] text-[#858585]">
                <button aria-label="Bookmark"><svg class="h-5 w-5" viewBox="0 0 20 20"><path d="M10 2l2.400 5.300 5.600.6-4.200 3.800 1.200 5.800-5-3-5 3 1.200-5.800L2 7.900l5.600-.6z" fill="none" stroke="#d5d5d5" stroke-width="1.500" /></svg></button>
                <button class="ml-5" aria-label="Back"><svg class="h-[22px] w-[18px]" viewBox="0 0 18 22"><path d="M9 1v6h8v8H9v6L0 11z" fill="#8c8c8c" /></svg></button>
                <button class="ml-6" aria-label="Forward"><svg class="h-[22px] w-[18px]" viewBox="0 0 18 22"><path d="M9 1v6H1v8h8v6l9-10z" fill="#8c8c8c" /></svg></button>
                <span class="ml-3.5 h-9 w-px bg-[#4a4a4a]"></span>
                <span class="ml-[18px] w-[31px] font-['Liberation_Serif',serif] text-[28px] leading-8 font-bold text-[#b5c7f0] italic">f</span>
                <a href="#">Replicated_GameEnd</a>
                <svg class="mx-2 h-4 w-3" viewBox="0 0 12 16"><path d="M2 1l7 7-7 7" fill="none" stroke="#fff" stroke-width="2" /></svg>
                <a href="#">Update Level Image</a>
                <span class="ml-auto pb-1 font-bold text-[#363636]">Zoom -1</span>
              </div>
            </div>
          </section>

          <!-- compiler results -->
          <section class="flex h-[178px] shrink-0 flex-col">
            <div class="ml-1 flex h-[22px] w-[150px] shrink-0 items-center rounded-t-sm bg-[#606060] pl-1.5 text-shadow-2xs">
              <svg class="h-4 w-4" viewBox="0 0 16 16"><path d="M2 1h9l3 3v11H2z" fill="#e8eefb" /><path d="M4 4l5 4-5 4V4z" fill="#3559a8" /><path d="M8 12h5" stroke="#3559a8" stroke-width="2" /></svg>
              <span class="ml-1.5">Compiler Results</span>
              <button class="mr-2 ml-auto text-[#333]" aria-label="Close Compiler Results"><svg class="h-2 w-2"><use href="#close" /></svg></button>
            </div>
            <div class="flex flex-1 flex-col rounded-b-sm border-2 border-[#606060] bg-[#3e3e3e] px-1 pt-1">
              <div class="flex-1 bg-[#222222]"></div>
              <button class="mr-1.5 flex h-[34px] items-center self-end text-[#7a7a7a]">Clear</button>
            </div>
          </section>
        </div>
      </main>

      <!-- taskbar -->
      <footer class="flex h-[39px] shrink-0 items-stretch border-t border-[#555] bg-[#3b3b3b] font-['Noto_Sans',sans-serif] text-[11px] text-white">
        <button class="ml-2 flex items-center" aria-label="Start">
          <svg class="h-[37px] w-[37px]" viewBox="0 0 38 38"><circle cx="19" cy="19" r="18" fill="url(#orb)" stroke="#7fb4d6" /><path d="M10 12q4-2.500 8-.5l-1.500 7q-4-1.500-8 .5z" fill="#ee5b2b" /><path d="M19.500 12q4 2 8.500-.5l-1.500 7q-4 2-8.500 0z" fill="#8cc63f" /><path d="M8 20.500q4-2 8-.5l-1.500 7q-4-1.500-8 .5z" fill="#3fa9f5" /><path d="M17.500 20.500q4 2 8.500 0l-1.500 7q-4 2-8.500-.5z" fill="#fcc82a" /></svg>
        </button>
        <button class="ml-6 flex w-[53px] items-center pl-1" aria-label="Notepad">
          <svg class="h-[35px] w-8" viewBox="0 0 32 35"><path d="M24 6l5 2-2 22-5 3z" fill="#d0a768" /><path d="M7 3l18 2-3 28L0 27z" fill="#64b3c4" /><path d="M7 5l17 2-2 14Q12 18 4 15z" fill="#a6dce4" /><path d="M16 33l6 0 1-10z" fill="#e8fbff" /><path d="M7 3h18" stroke="#ddd" stroke-width="3" stroke-dasharray="1.500 1" /></svg>
        </button>
        <button class="flex w-[158px] items-center gap-[5px] border border-[#2a2a2a] border-t-[#777] bg-[#515151] pl-[9px] whitespace-nowrap">
          <svg class="h-[31px] w-[31px]" viewBox="-16 -16 32 32"><circle r="15" fill="#34a853" /><path d="M-13-7.500A15 15 0 0 1 13-7.500L0-7.500-6.500 3.700z" fill="#dd4b3e" /><path d="M13-7.500A15 15 0 0 1 0 15L6.500 3.700 0-7.500z" fill="#fbd24a" /><circle r="7" fill="#f4f4f4" /><circle r="5.500" fill="#4c8bf5" /></svg>
          Edit Page ‹ FPS Ga...
        </button>
        <button class="ml-1 flex w-[159px] items-center gap-[5px] border border-[#2a2a2a] border-t-[#777] bg-[#515151] pl-2 whitespace-nowrap">
          <svg class="h-[33px] w-[31px]" viewBox="0 0 34 34"><circle cx="17" cy="17" r="15.500" fill="#181818" stroke="#e5e5e5" stroke-width="1.300" /><use href="#unreal" x="4.500" y="5" width="25" height="24" /></svg>
          FPS_Game_v1_9_...
        </button>
        <button class="flex w-40 items-center gap-[5px] border border-l-0 border-[#2a2a2a] border-t-[#999] bg-[radial-gradient(ellipse_at_50%_110%,#7f9cc4,#5c5c5c_50%)] pl-2.5 whitespace-nowrap">
          <svg class="h-[33px] w-[31px]" viewBox="0 0 34 34"><circle cx="17" cy="17" r="15.500" fill="#181818" stroke="#e5e5e5" stroke-width="1.300" /><use href="#unreal" x="4.500" y="5" width="25" height="24" /></svg>
          Replicated_Game...
        </button>
        <!-- tray -->
        <div class="ml-auto flex items-center gap-2">
          <svg class="h-4 w-4" viewBox="0 0 16 16"><path d="M3 3.500Q8 1.500 13 3.500 15.500 7 15.500 12 13.500 13.500 11.500 13.500L10.500 12h-5l-1 1.500Q2.500 13.500.5 12 .5 7 3 3.500z" fill="#fff" /><circle cx="5.500" cy="8.500" r="1.400" fill="#3b3b3b" /><circle cx="10.500" cy="8.500" r="1.400" fill="#3b3b3b" /></svg>
          <svg class="h-4 w-4" viewBox="0 0 16 16"><path d="M2 2q6-2 12 0v8q-2 5-6 6-4-1-6-6z" fill="#161616" stroke="#d9cfc8" /><path d="M4 4q3-1 5 0v2H4zM10 4h2v3h-2zM5 8q3 1 6 0v2H5z" fill="#eee" /><path d="M6 12h4v1.500H6z" fill="#c9776a" /></svg>
          <svg class="h-4 w-4" viewBox="0 0 16 16"><path d="M0 0h16v16H0z" fill="#1f2a33" /><path d="M1 3h14v10H1z" fill="#6fa312" /><path d="M2 8q5-6 11 0-5 5-9 1 3-3 6-1M8 3v10" fill="none" stroke="#17250b" stroke-width="1.300" /></svg>
          <svg class="h-4 w-4" viewBox="0 0 16 16"><path d="M1 0h14v13l-7 3-7-3z" fill="#050505" /><path d="M3.500 2.500h2M3.500 5h2M3.500 7.500h2M3 2v6M7 8V2h1.500v3H7M10.500 2v6M14 2.500h-1.500v5H14M4 11h8" stroke="#fff" fill="none" /></svg>
          <svg class="h-4 w-4" viewBox="0 0 16 16"><path d="M5 0h11v4h-5v3H5z" fill="#129c3c" /><path d="M0 5h6l2 2h7v9H0z" fill="#20b64c" /><path d="M4 10l3 3 5-5" fill="none" stroke="#fff" stroke-width="2" /></svg>
          <svg class="h-4 w-4" viewBox="0 0 16 16"><circle cx="8" cy="8" r="8" fill="#1d4f7d" /><path d="M0 9l5 2.500L10 6" stroke="#fff" stroke-width="2" fill="none" /><circle cx="10.500" cy="5.500" r="2.800" fill="#1d4f7d" stroke="#fff" stroke-width="1.500" /><circle cx="5.500" cy="11.500" r="2" fill="#fff" /></svg>
          <svg class="h-4 w-4" viewBox="0 0 16 16"><path d="M6 2h8l-3 4h4L6 13h4L2 15l2-5H1z" fill="#ee9c23" stroke="#fff0c9" /><path d="M4 7l8-1-7 6" stroke="#8a4c0b" fill="none" /></svg>
          <svg class="h-4 w-4" viewBox="0 0 16 16"><path d="M1 5h4l5-5v16l-5-5H1z" fill="#e2643d" /><path d="M12 4v8M14.500 3v10" stroke="#9b2e1d" stroke-width="1.300" /></svg>
          <svg class="h-4 w-4" viewBox="0 0 16 16"><path d="M2 1v15" stroke="#fff" stroke-width="1.500" /><path d="M3 2h5l1 2h6l-2 3 1 2H9L8 7H3z" fill="#fff" /></svg>
          <svg class="h-4 w-4" viewBox="0 0 16 16"><path d="M1 11h2v3H1zM4 9h2v5H4zM7 7h2v7H7zM10 4h2v10h-2zM13 2h2v12h-2z" fill="#f4f4f4" /></svg>
          <svg class="h-4 w-4" viewBox="0 0 16 16"><path d="M1 6h3l4-4v12l-4-4H1z" fill="#fff" /><path d="M10 5.500q2 2.500 0 5M12.500 3.500q3 4.500 0 9" fill="none" stroke="#ddd" stroke-width="1.300" /></svg>
        </div>
        <div class="mr-1.5 ml-2.5 flex w-[59px] flex-col items-center justify-center leading-[17px]"><span>13:20</span><span>24.9.2019.</span></div>
        <button class="w-3.5 border-l border-[#222] bg-[#5a5a5a]" aria-label="Show desktop"></button>
      </footer>
    </div>
  </body>
</html>
